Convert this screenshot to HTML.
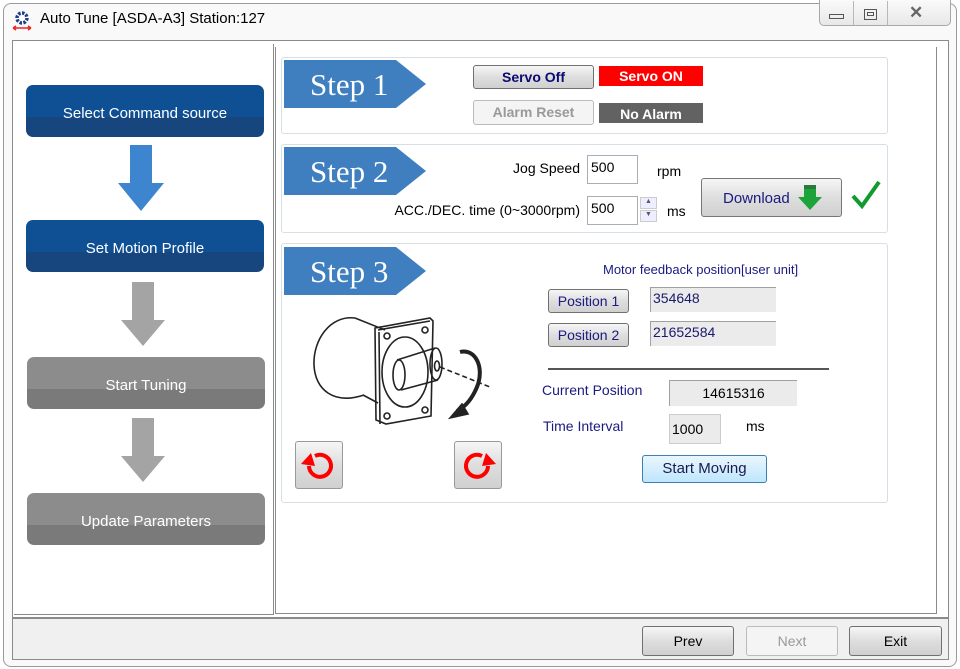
<!DOCTYPE html>
<html><head><meta charset="utf-8"><style>
*{margin:0;padding:0;box-sizing:border-box}
body{width:960px;height:669px;overflow:hidden;background:#fff;font-family:"Liberation Sans",sans-serif;position:relative}
.a{position:absolute}
.win{left:3px;top:3px;width:954px;height:664px;border:1px solid #9a9a9a;border-radius:8px;background:#f9f9f9}
.btn{position:absolute;border:1px solid #707070;border-radius:3px;background:linear-gradient(#f6f6f6,#dedede 50%,#d0d0d0);text-align:center;font-size:14px;color:#000}
.grp{position:absolute;border:1px solid #d5dfe5;border-radius:3px;background:#fff}
.step{position:absolute;width:142px;height:48px}
.step span{position:absolute;left:26px;top:7px;font-family:"Liberation Serif",serif;font-size:31px;color:#fff}
.lb{position:absolute;border-radius:7px;color:#fff;font-size:15px;text-align:center;line-height:57px;overflow:hidden}
.blue{background:linear-gradient(#0f4f93 0 62%,#17467e 62%)}
.gray{background:linear-gradient(#8c8c8c 0 62%,#7a7a7a 62%)}
.inp{position:absolute;border:1px solid #abadb3;background:#fff;font-size:14px;padding:3px 3px}
.fld{position:absolute;background:#ebebeb;border-top:1px solid #a0a0a0;border-left:1px solid #a0a0a0;font-size:14px;color:#1a1a6a;padding:2px 2px}
.nv{color:#1a1a80;font-size:14px;position:absolute}
</style></head><body>
<div class="a win"></div>
<svg class="a" style="left:11px;top:9px" width="22" height="22" viewBox="0 0 22 22"><circle cx="11" cy="9" r="5" fill="none" stroke="#1d3e8a" stroke-width="3.5" stroke-dasharray="2.5 1.4"/><circle cx="11" cy="9" r="2.2" fill="#fff"/><path d="M2 19h18M2 19l3-2M2 19l3 2M20 19l-3-2M20 19l-3 2" stroke="#e22" stroke-width="1.5" fill="none"/></svg>
<div class="a" style="left:40px;top:10px;font-size:15px;color:#000">Auto Tune [ASDA-A3] Station:127</div>
<div class="a" style="left:819px;top:0;width:132px;height:26px;border:1px solid #a8a8a8;border-top:none;border-radius:0 0 5px 5px;background:linear-gradient(#fafafa,#e8e8e8)"></div>
<div class="a" style="left:853px;top:1px;width:1px;height:24px;background:#b8b8b8"></div>
<div class="a" style="left:887px;top:1px;width:1px;height:24px;background:#b8b8b8"></div>
<div class="a" style="left:829px;top:14px;width:15px;height:5px;border:1px solid #555"></div>
<div class="a" style="left:864px;top:9px;width:13px;height:11px;border:1px solid #555"><div style="margin:2px;height:4px;border:1px solid #555"></div></div>
<div class="a" style="left:909px;top:3px;font-size:17px;color:#666;font-weight:bold">✕</div>
<div class="a" style="left:12px;top:40px;width:937px;height:578px;border:1px solid #8a8a8a;background:#fff"></div>
<div class="a" style="left:14px;top:44px;width:260px;height:571px;border-right:1px solid #8a8a8a;border-bottom:1px solid #8a8a8a;background:#fff"></div>
<div class="a" style="left:275px;top:47px;width:662px;height:567px;border-left:1px solid #8a8a8a;border-right:1px solid #8a8a8a;border-bottom:1px solid #8a8a8a;background:#fff"></div>
<div class="a" style="left:12px;top:618px;width:937px;height:42px;border:1px solid #8a8a8a;background:#f0f0f0"></div>
<div class="lb blue" style="left:26px;top:85px;width:238px;height:52px">Select Command source</div>
<svg class="a" style="left:118px;top:145px" width="48" height="68"><path d="M12 0h22v38h12L23 66 0 38h12z" fill="#3d86cf"/></svg>
<div class="lb blue" style="left:26px;top:220px;width:238px;height:52px">Set Motion Profile</div>
<svg class="a" style="left:120px;top:282px" width="48" height="66"><path d="M12 0h22v38h11L23 64 1 38h11z" fill="#a4a4a4"/></svg>
<div class="lb gray" style="left:27px;top:357px;width:238px;height:52px">Start Tuning</div>
<svg class="a" style="left:120px;top:418px" width="48" height="66"><path d="M12 0h22v38h11L23 64 1 38h11z" fill="#a4a4a4"/></svg>
<div class="lb gray" style="left:27px;top:493px;width:238px;height:52px">Update Parameters</div>
<div class="grp" style="left:281px;top:57px;width:607px;height:77px"></div>
<svg class="step" style="left:284px;top:60px"><path d="M0 0h112l30 24-30 24H0z" fill="#3f7fc0"/></svg><div class="step" style="left:284px;top:60px"><span>Step 1</span></div>
<div class="btn" style="left:473px;top:65px;width:121px;height:24px;font-weight:bold;color:#0a0a70;line-height:22px;font-size:14px">Servo Off</div>
<div class="a" style="left:599px;top:66px;width:104px;height:20px;background:#f00;color:#fff;font-weight:bold;font-size:14px;text-align:center;line-height:20px">Servo ON</div>
<div class="btn" style="left:473px;top:100px;width:121px;height:25px;font-weight:bold;color:#999;border-color:#bbb;background:#f4f4f4;line-height:23px;font-size:14px">Alarm Reset</div>
<div class="a" style="left:599px;top:103px;width:104px;height:20px;background:#626262;color:#fff;font-weight:bold;font-size:14px;text-align:center;line-height:22px">No Alarm</div>
<div class="grp" style="left:281px;top:144px;width:607px;height:89px"></div>
<svg class="step" style="left:284px;top:147px"><path d="M0 0h112l30 24-30 24H0z" fill="#3f7fc0"/></svg><div class="step" style="left:284px;top:147px"><span>Step 2</span></div>
<div class="a" style="left:480px;top:160px;width:100px;text-align:right;font-size:14px">Jog Speed</div>
<div class="inp" style="left:587px;top:155px;width:51px;height:29px">500</div>
<div class="a" style="left:657px;top:163px;font-size:14px">rpm</div>
<div class="a" style="left:330px;top:202px;width:250px;text-align:right;font-size:14px">ACC./DEC. time (0~3000rpm)</div>
<div class="inp" style="left:587px;top:196px;width:51px;height:29px">500</div>
<div class="a" style="left:640px;top:197px;width:17px;height:12px;border:1px solid #ccc;background:#eef;font-size:7px;text-align:center;color:#557">▲</div>
<div class="a" style="left:640px;top:210px;width:17px;height:12px;border:1px solid #ccc;background:#eef;font-size:7px;text-align:center;color:#557">▼</div>
<div class="a" style="left:667px;top:203px;font-size:14px">ms</div>
<div class="btn" style="left:701px;top:178px;width:141px;height:39px;border-color:#777"><span style="position:absolute;left:21px;top:11px;color:#1a1a80;font-size:15px">Download</span><svg style="position:absolute;left:95px;top:6px" width="26" height="26"><path d="M7 0h12v12h6L13 25 1 12h6z" fill="#1ea33a"/><path d="M7 0h12v4H7z" fill="#2a7a40"/></svg></div>
<svg class="a" style="left:851px;top:180px" width="30" height="30"><path d="M2 16l9 10L28 2" stroke="#129a2e" stroke-width="4" fill="none"/></svg>
<div class="grp" style="left:281px;top:243px;width:607px;height:260px"></div>
<svg class="step" style="left:284px;top:247px"><path d="M0 0h112l30 24-30 24H0z" fill="#3f7fc0"/></svg><div class="step" style="left:284px;top:247px"><span>Step 3</span></div>
<svg class="a" style="left:305px;top:310px" width="195" height="120" viewBox="0 0 195 120" fill="none" stroke="#222" stroke-width="1.6">
<path d="M50 8C25 5 8 30 9 55c1 25 20 40 50 30"/><path d="M50 8l30 12"/><path d="M58 85l15 8"/>
<path d="M70 18l55-10 3 3-2 95-45 8-10-4z"/><path d="M73 20l52-9"/><path d="M74 22l1 92"/>
<ellipse cx="100" cy="62" rx="23" ry="35"/>
<circle cx="82" cy="26" r="3"/><circle cx="120" cy="20" r="3"/><circle cx="82" cy="106" r="3"/><circle cx="120" cy="100" r="3"/>
<path d="M92 50l38-12M96 80l37-10"/><ellipse cx="94" cy="65" rx="6" ry="15"/><ellipse cx="131" cy="54" rx="6" ry="16"/><ellipse cx="132" cy="56" rx="2.5" ry="5"/>
<path d="M135 57l50 20" stroke-dasharray="5 3"/>
<path d="M155 42c15-4 25 15 17 35-5 12-12 20-20 24" stroke-width="4"/><path d="M145 108l12-14 6 10z" fill="#222"/>
</svg>
<div class="btn" style="left:295px;top:441px;width:48px;height:48px;border-color:#999"><svg width="46" height="46" viewBox="0 0 46 46"><path d="M13 24a11 11 0 1 0 6-10" stroke="#f00" stroke-width="4" fill="none"/><path d="M5 22l10-11 4 13z" fill="#f00"/></svg></div>
<div class="btn" style="left:454px;top:441px;width:48px;height:48px;border-color:#999"><svg width="46" height="46" viewBox="0 0 46 46"><path d="M33 24a11 11 0 1 1 -6-10" stroke="#f00" stroke-width="4" fill="none"/><path d="M41 22l-10-11-4 13z" fill="#f00"/></svg></div>
<div class="a" style="left:603px;top:262px;font-size:13px;color:#1a1a80">Motor feedback position[user unit]</div>
<div class="btn" style="left:548px;top:289px;width:81px;height:24px;line-height:22px;color:#1a1a80">Position 1</div>
<div class="fld" style="left:650px;top:287px;width:126px;height:25px">354648</div>
<div class="btn" style="left:548px;top:323px;width:81px;height:24px;line-height:22px;color:#1a1a80">Position 2</div>
<div class="fld" style="left:650px;top:321px;width:126px;height:25px">21652584</div>
<div class="a" style="left:548px;top:368px;width:281px;height:2px;background:#555"></div>
<div class="nv" style="left:542px;top:382px">Current Position</div>
<div class="fld" style="left:669px;top:380px;width:128px;height:26px;color:#000;text-align:center;line-height:21px">14615316</div>
<div class="nv" style="left:543px;top:418px">Time Interval</div>
<div class="fld" style="left:669px;top:414px;width:52px;height:30px;border:1px solid #ccc;line-height:24px;color:#000">1000</div>
<div class="a" style="left:746px;top:418px;font-size:14px;color:#000">ms</div>
<div class="btn" style="left:642px;top:455px;width:125px;height:28px;border-color:#3c7fb1;background:linear-gradient(#eaf6fd,#bee6fd);line-height:26px;color:#1a1a50;font-size:15px">Start Moving</div>
<div class="btn" style="left:642px;top:626px;width:92px;height:30px;line-height:28px">Prev</div>
<div class="btn" style="left:746px;top:626px;width:92px;height:30px;line-height:28px;color:#999;border-color:#bbb;background:#f4f4f4">Next</div>
<div class="btn" style="left:849px;top:626px;width:93px;height:30px;line-height:28px">Exit</div>
</body></html>
